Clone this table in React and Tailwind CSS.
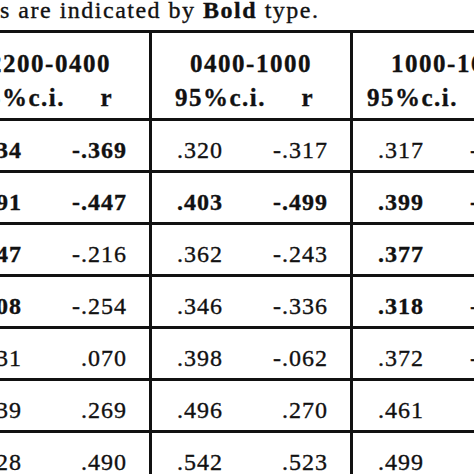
const heads = [
  { span: "2200-0400", pl: "pl-[23px]" },
  { span: "0400-1000", pl: "pl-[23px]" },
  { span: "1000-1600", pl: "pl-[14px]" },
];

// [value, bold] pairs: ci and r for each of the three time bands
const rows = [
  [[".334", 1], ["-.369", 1], [".320", 0], ["-.317", 0], [".317", 0], ["-.295", 0]],
  [[".391", 1], ["-.447", 1], [".403", 1], ["-.499", 1], [".399", 1], ["-.431", 1]],
  [[".347", 1], ["-.216", 0], [".362", 0], ["-.243", 0], [".377", 1], [".206", 0]],
  [[".308", 1], ["-.254", 0], [".346", 0], ["-.336", 0], [".318", 1], ["-.310", 0]],
  [[".331", 0], [".070", 0], [".398", 0], ["-.062", 0], [".372", 0], ["-.105", 0]],
  [[".339", 0], [".269", 0], [".496", 0], [".270", 0], [".461", 0], [".232", 0]],
  [[".328", 0], [".490", 0], [".542", 0], [".523", 0], [".499", 0], [".476", 0]],
];

function Cell({ ci, r, last }) {
  return (
    <div
      className={`flex w-[201px] shrink-0 justify-between border-r-[3px] border-[#111] pl-[25px] pt-[14px] text-[24px] leading-[30px] tracking-[1px] ${
        last ? "pr-[26px]" : "pr-[22px]"
      }`}
    >
      <span className={ci[1] ? "font-bold" : ""}>{ci[0]}</span>
      <span className={r[1] ? "font-bold" : ""}>{r[0]}</span>
    </div>
  );
}

export default function App() {
  return (
    <div className="h-[474px] w-[474px] overflow-hidden bg-white [font-family:'Liberation_Serif','Times_New_Roman',serif] text-[#111] [-webkit-text-stroke:0.35px_#111]">
      <p className="whitespace-nowrap pt-[1px] text-[24px] leading-[19px] tracking-[1.5px]">
        s are indicated by <b>Bold</b> type.
      </p>

      <div className="ml-[-49px] mt-[10px] w-max border-t-[3px] border-[#111]">
        <div className="flex h-[88px] border-b-[3px] border-[#111]">
          {heads.map((h) => (
            <div
              key={h.span}
              className="flex w-[201px] shrink-0 flex-col border-r-[3px] border-[#111] pt-[14px] text-[25px] font-bold leading-[34px] tracking-[1.5px]"
            >
              <span className="text-center">{h.span}</span>
              <div className={`flex justify-between pr-[36px] ${h.pl}`}>
                <span>95%c.i.</span>
                <span>r</span>
              </div>
            </div>
          ))}
        </div>

        {rows.map((row, i) => (
          <div key={i} className="flex h-[52px] border-b-[3px] border-[#111]">
            <Cell ci={row[0]} r={row[1]} />
            <Cell ci={row[2]} r={row[3]} />
            <Cell ci={row[4]} r={row[5]} last />
          </div>
        ))}
      </div>
    </div>
  );
}
